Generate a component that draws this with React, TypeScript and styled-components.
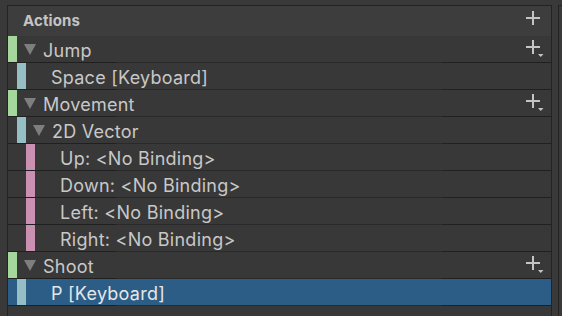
import React from "react";
import styled, { createGlobalStyle } from "styled-components";

type Kind = "action" | "binding" | "part";

type Item = {
  label: string;
  kind: Kind;
  depth: number;
  foldout?: boolean;
  add?: boolean;
  selected?: boolean;
};

const items: Item[] = [
  { label: "Jump", kind: "action", depth: 0, foldout: true, add: true },
  { label: "Space [Keyboard]", kind: "binding", depth: 1 },
  { label: "Movement", kind: "action", depth: 0, foldout: true, add: true },
  { label: "2D Vector", kind: "binding", depth: 1, foldout: true },
  { label: "Up: <No Binding>", kind: "part", depth: 2 },
  { label: "Down: <No Binding>", kind: "part", depth: 2 },
  { label: "Left: <No Binding>", kind: "part", depth: 2 },
  { label: "Right: <No Binding>", kind: "part", depth: 2 },
  { label: "Shoot", kind: "action", depth: 0, foldout: true, add: true },
  { label: "P [Keyboard]", kind: "binding", depth: 1, selected: true },
];

const barColors: Record<Kind, string> = {
  action: "#a5d69b",
  binding: "#95bfc4",
  part: "#c990b1",
};

const PlusIcon = ({ dropdown }: { dropdown?: boolean }) =>
  dropdown ? (
    <svg width="18" height="26" viewBox="0 0 18 26">
      <rect x="6" y="4" width="2" height="14" fill="#c4c4c4" />
      <rect x="0" y="10" width="14" height="2" fill="#c4c4c4" />
      <polygon points="12,18 17.5,18 14.75,21" fill="#c4c4c4" />
    </svg>
  ) : (
    <svg width="18" height="30" viewBox="0 0 18 30">
      <rect x="6" y="5" width="2" height="14" fill="#c4c4c4" />
      <rect x="0" y="11" width="14" height="2" fill="#c4c4c4" />
    </svg>
  );

const App = () => {
  return (
    <>
      <GlobalStyle />
      <Page>
        <Panel>
          <Header>
            <Title>Actions</Title>
            <AddButton>
              <PlusIcon />
            </AddButton>
          </Header>
          {items.map((item) => (
            <Row key={item.label} $selected={item.selected}>
              <Indent $depth={item.depth} />
              <Bar $color={barColors[item.kind]} />
              <Arrow $foldout={item.foldout}>{item.foldout && <Triangle />}</Arrow>
              <Label $selected={item.selected}>{item.label}</Label>
              {item.add && (
                <AddButton>
                  <PlusIcon dropdown />
                </AddButton>
              )}
            </Row>
          ))}
        </Panel>
        <Side>
          <SideFrame />
        </Side>
      </Page>
    </>
  );
};

const GlobalStyle = createGlobalStyle`
  html, body {
    margin: 0;
    padding: 0;
    background: #393939;
  }
  body {
    font-family: Inter, "Noto Sans", sans-serif;
    overflow: hidden;
  }
`;

const Page = styled.div`
  display: flex;
  width: 562px;
  height: 316px;
  padding: 5px 0 0 7px;
  box-sizing: border-box;
  background: #393939;
`;

const Panel = styled.div`
  width: 545px;
  display: flex;
  flex-direction: column;
  border: 1px solid #232323;
  border-bottom: none;
  background: #383838;
  box-sizing: border-box;
`;

const Header = styled.div`
  flex: none;
  height: 30px;
  display: flex;
  align-items: flex-start;
  background: #3d3d3d;
  padding-left: 15px;
`;

const Title = styled.div`
  font-size: 15px;
  font-weight: 700;
  line-height: 30px;
  color: #c4c4c4;
  letter-spacing: 0.1px;
`;

const AddButton = styled.div`
  margin-left: auto;
  width: 18px;
  margin-right: 7px;
  display: flex;
`;

const Row = styled.div<{ $selected?: boolean }>`
  flex: none;
  height: 27px;
  display: flex;
  align-items: stretch;
  box-sizing: border-box;
  padding-bottom: 1px;
  background: ${(p) => (p.$selected ? "#2c5d87" : "#383838")};
  background-image: linear-gradient(
    to right,
    #202020 0,
    #202020 108px,
    #2a2a2a 108px,
    #2a2a2a 434px,
    #202020 434px
  );
  background-size: 100% 1px;
  background-position: bottom left;
  background-repeat: no-repeat;
`;

const Indent = styled.div<{ $depth: number }>`
  flex: none;
  width: ${(p) => p.$depth * 9}px;
`;

const Bar = styled.div<{ $color: string }>`
  flex: none;
  width: 9px;
  background: ${(p) => p.$color};
`;

const Arrow = styled.div<{ $foldout?: boolean }>`
  flex: none;
  width: ${(p) => (p.$foldout ? 26 : 25)}px;
  display: flex;
  align-items: center;
  padding-left: 7px;
  box-sizing: border-box;
`;

const Triangle = styled.div`
  width: 0;
  height: 0;
  border-left: 6px solid transparent;
  border-right: 6px solid transparent;
  border-top: 11px solid #7e7e7e;
`;

const Label = styled.div<{ $selected?: boolean }>`
  font-size: 18px;
  letter-spacing: 0.25px;
  line-height: 26px;
  padding-top: 2px;
  color: ${(p) => (p.$selected ? "#e6e6e6" : "#c8c8c8")};
  white-space: nowrap;
`;

const Side = styled.div`
  flex: none;
  width: 10px;
  padding-left: 6px;
  box-sizing: border-box;
  display: flex;
`;

const SideFrame = styled.div`
  flex: 1;
  border-left: 1px solid #232323;
  border-top: 1px solid #232323;
`;

export default App;
